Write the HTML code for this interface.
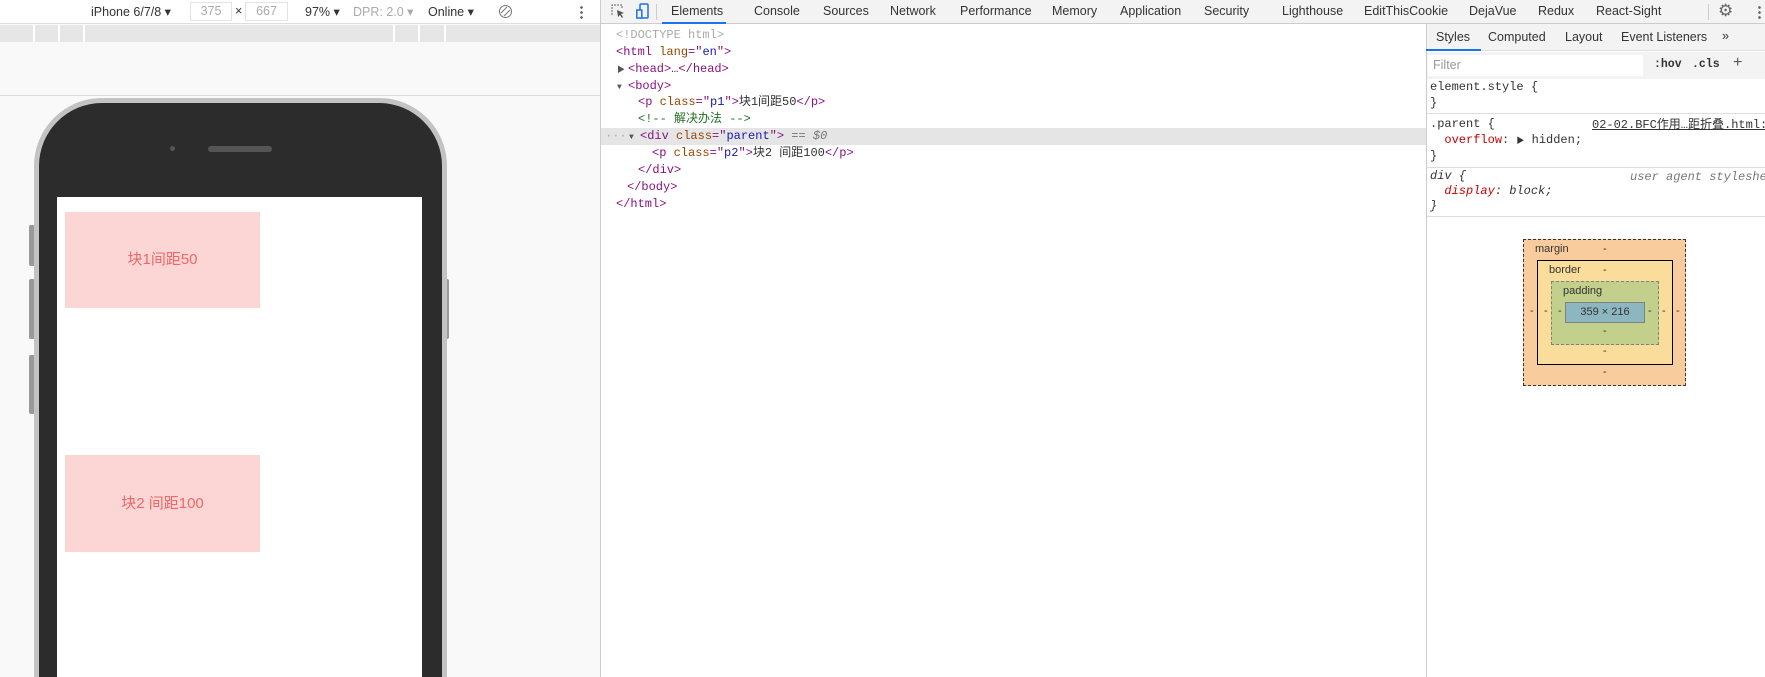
<!DOCTYPE html>
<html><head><meta charset="utf-8"><style>
*{box-sizing:border-box;margin:0;padding:0}
html,body{width:1765px;height:677px;overflow:hidden}
body{background:#fff;font-family:"Liberation Sans","Noto Sans CJK SC",sans-serif;font-size:12.5px;color:#333}
#w{position:relative;width:1765px;height:677px;overflow:hidden}
.a{position:absolute;white-space:nowrap}
.m{font-family:"Liberation Mono","Noto Sans CJK SC",monospace;font-size:12px}
.tag{color:#881280}.at{color:#994500}.av{color:#1a1aa6}.g{color:#aaa}.cm{color:#236e25}
.ln{position:absolute;white-space:nowrap;line-height:17px}
</style></head><body><div id="w">
<div class="a" style="left:0;top:0;width:600px;height:677px;background:#f9f9f9"></div>
<div class="a" style="left:0;top:0;width:600px;height:24px;background:#fff;border-bottom:1px solid #ddd"></div>
<div class="a" style="left:91px;top:4px;color:#333">iPhone 6/7/8 ▾</div>
<div class="a" style="left:190px;top:2px;width:42px;height:19px;border:1px solid #e3e3e3;color:#aaa;text-align:center;line-height:17px">375</div>
<div class="a" style="left:235px;top:4px;color:#333">×</div>
<div class="a" style="left:245px;top:2px;width:43px;height:19px;border:1px solid #e3e3e3;color:#aaa;text-align:center;line-height:17px">667</div>
<div class="a" style="left:305px;top:4px">97% ▾</div>
<div class="a" style="left:353px;top:4px;color:#aaa">DPR: 2.0 ▾</div>
<div class="a" style="left:428px;top:4px">Online ▾</div>
<svg class="a" style="left:498px;top:4px" width="15" height="15" viewBox="0 0 15 15"><circle cx="7.5" cy="7.5" r="6" fill="none" stroke="#777"/><path d="M3 9 L9 3 M6 12 L12 6" stroke="#777"/></svg>
<div class="a" style="left:580px;top:5px;width:3px;height:14px;background:radial-gradient(circle,#666 1.2px,transparent 1.5px) 0 0/3px 5px"></div>
<div class="a" style="left:0;top:25px;width:600px;height:17px;background:#e6e6e6"></div>
<div class="a" style="left:33px;top:25px;width:2px;height:17px;background:#fff"></div>
<div class="a" style="left:58px;top:25px;width:2px;height:17px;background:#fff"></div>
<div class="a" style="left:83px;top:25px;width:2px;height:17px;background:#fff"></div>
<div class="a" style="left:393px;top:25px;width:2px;height:17px;background:#fff"></div>
<div class="a" style="left:418px;top:25px;width:2px;height:17px;background:#fff"></div>
<div class="a" style="left:444px;top:25px;width:2px;height:17px;background:#fff"></div>
<div class="a" style="left:0;top:95px;width:600px;height:1px;background:#ddd"></div>
<div class="a" style="left:29px;top:225px;width:6px;height:41px;background:#999;border-radius:2px"></div>
<div class="a" style="left:29px;top:279px;width:6px;height:60px;background:#999;border-radius:2px"></div>
<div class="a" style="left:29px;top:355px;width:6px;height:59px;background:#999;border-radius:2px"></div>
<div class="a" style="left:443px;top:279px;width:6px;height:60px;background:#999;border-radius:2px"></div>
<div class="a" style="left:34px;top:98px;width:413px;height:579px;background:#c3c3c3;border-radius:68px 68px 0 0"></div>
<div class="a" style="left:39px;top:103px;width:403px;height:574px;background:#2c2c2c;border-radius:63px 63px 0 0"></div>
<div class="a" style="left:170px;top:146px;width:5px;height:5px;border-radius:50%;background:#555"></div>
<div class="a" style="left:208px;top:146px;width:64px;height:6px;border-radius:3px;background:#555"></div>
<div class="a" style="left:57px;top:197px;width:365px;height:480px;background:#fff"></div>
<div class="a" style="left:65px;top:212px;width:195px;height:96px;background:#fcd5d5;color:#f06767;font-size:15px;text-align:center;line-height:96px">块1间距50</div>
<div class="a" style="left:65px;top:455px;width:195px;height:97px;background:#fcd5d5;color:#f06767;font-size:15px;text-align:center;line-height:97px">块2 间距100</div>
<div class="a" style="left:600px;top:0;width:1px;height:677px;background:#ccc"></div>
<div class="a" style="left:601px;top:0;width:1164px;height:24px;background:#f3f3f3;border-bottom:1px solid #ccc"></div>
<svg class="a" style="left:611px;top:4px" width="14" height="15" viewBox="0 0 14 15"><path d="M1 11V1h10v4" fill="none" stroke="#666" stroke-dasharray="2 1"/><path d="M6 6l7 3-3 1 2 3-1 1-2-3-2 2z" fill="#555"/></svg>
<svg class="a" style="left:636px;top:3px" width="13" height="17" viewBox="0 0 13 17"><rect x="4" y="1" width="8" height="14" rx="1" fill="none" stroke="#1a73e8" stroke-width="1.5"/><rect x="0.8" y="7" width="5" height="8" fill="#f3f3f3" stroke="#1a73e8" stroke-width="1.5"/></svg>
<div class="a" style="left:656px;top:4px;width:1px;height:16px;background:#ccc"></div>
<div class="a" style="left:671px;top:4px;color:#333">Elements</div>
<div class="a" style="left:662px;top:22px;width:64px;height:2px;background:#1a73e8"></div>
<div class="a" style="left:754px;top:4px">Console</div>
<div class="a" style="left:823px;top:4px">Sources</div>
<div class="a" style="left:890px;top:4px">Network</div>
<div class="a" style="left:960px;top:4px">Performance</div>
<div class="a" style="left:1052px;top:4px">Memory</div>
<div class="a" style="left:1120px;top:4px">Application</div>
<div class="a" style="left:1204px;top:4px">Security</div>
<div class="a" style="left:1282px;top:4px">Lighthouse</div>
<div class="a" style="left:1364px;top:4px">EditThisCookie</div>
<div class="a" style="left:1469px;top:4px">DejaVue</div>
<div class="a" style="left:1538px;top:4px">Redux</div>
<div class="a" style="left:1596px;top:4px">React-Sight</div>
<div class="a" style="left:1708px;top:4px;width:1px;height:16px;background:#ccc"></div>
<div class="a" style="left:1718px;top:1px;font-size:17px;color:#666">⚙</div>
<div class="a" style="left:1758px;top:5px;width:3px;height:14px;background:radial-gradient(circle,#666 1.2px,transparent 1.5px) 0 0/3px 5px"></div>
<div class="a" style="left:601px;top:128px;width:825px;height:17px;background:#e5e5e5"></div>
<div class="m">
<div class="ln g" style="left:605px;top:128px">···</div>
<div class="ln g" style="left:616px;top:27px">&lt;!DOCTYPE html&gt;</div>
<div class="ln" style="left:616px;top:44px"><span class="tag">&lt;html</span> <span class="at">lang</span><span class="tag">="</span><span class="av">en</span><span class="tag">"&gt;</span></div>
<div class="ln" style="left:617px;top:61px"><span style="color:#555;font-size:8px">▶</span></div>
<div class="ln" style="left:628px;top:61px"><span class="tag">&lt;head&gt;</span>…<span class="tag">&lt;/head&gt;</span></div>
<div class="ln" style="left:617px;top:78px"><span style="color:#555;font-size:8px">▼</span></div>
<div class="ln" style="left:628px;top:78px"><span class="tag">&lt;body&gt;</span></div>
<div class="ln" style="left:638px;top:94px"><span class="tag">&lt;p</span> <span class="at">class</span><span class="tag">="</span><span class="av">p1</span><span class="tag">"&gt;</span>块1间距50<span class="tag">&lt;/p&gt;</span></div>
<div class="ln cm" style="left:638px;top:111px">&lt;!-- 解决办法 --&gt;</div>
<div class="ln" style="left:629px;top:128px"><span style="color:#555;font-size:8px">▼</span></div>
<div class="ln" style="left:640px;top:128px"><span class="tag">&lt;div</span> <span class="at">class</span><span class="tag">="</span><span class="av">parent</span><span class="tag">"&gt;</span> <span style="color:#777">== <i>$0</i></span></div>
<div class="ln" style="left:652px;top:145px"><span class="tag">&lt;p</span> <span class="at">class</span><span class="tag">="</span><span class="av">p2</span><span class="tag">"&gt;</span>块2 间距100<span class="tag">&lt;/p&gt;</span></div>
<div class="ln tag" style="left:638px;top:162px">&lt;/div&gt;</div>
<div class="ln tag" style="left:627px;top:179px">&lt;/body&gt;</div>
<div class="ln tag" style="left:616px;top:196px">&lt;/html&gt;</div>
</div>
<div class="a" style="left:1426px;top:24px;width:1px;height:653px;background:#ccc"></div>
<div class="a" style="left:1427px;top:24px;width:338px;height:27px;background:#f3f3f3;border-bottom:1px solid #ddd"></div>
<div class="a" style="left:1436px;top:30px">Styles</div>
<div class="a" style="left:1426px;top:49px;width:55px;height:2px;background:#1a73e8"></div>
<div class="a" style="left:1488px;top:30px">Computed</div>
<div class="a" style="left:1565px;top:30px">Layout</div>
<div class="a" style="left:1621px;top:30px">Event Listeners</div>
<div class="a" style="left:1722px;top:29px">»</div>
<div class="a" style="left:1427px;top:52px;width:338px;height:27px;background:#f3f3f3"></div>
<div class="a" style="left:1428px;top:55px;width:215px;height:21px;background:#fff;color:#999;padding:3px 5px">Filter</div>
<div class="a m" style="left:1654px;top:58px;font-weight:bold;font-size:11.5px;color:#333">:hov</div>
<div class="a m" style="left:1692px;top:58px;font-weight:bold;font-size:11.5px;color:#333">.cls</div>
<div class="a" style="left:1733px;top:54px;font-size:16px;color:#555">+</div>
<div class="a m" style="left:1430px;top:79px;line-height:16px;color:#333">element.style {<br>}</div>
<div class="a" style="left:1427px;top:113px;width:338px;height:1px;background:#ddd"></div>
<div class="a m" style="left:1430px;top:117px;line-height:15.5px;color:#333">.parent {<br>&nbsp;&nbsp;<span style="color:#c80000">overflow</span>: <span style="font-size:8px">▶</span> hidden;<br>}</div>
<div class="a m" style="left:1592px;top:117px;line-height:16px;text-decoration:underline;color:#333">02-02.BFC作用…距折叠.html:</div>
<div class="a" style="left:1427px;top:167px;width:338px;height:1px;background:#ddd"></div>
<div class="a m" style="left:1430px;top:169px;line-height:15px;color:#333;font-style:italic">div {<br>&nbsp;&nbsp;<span style="color:#c80000">display</span>: block;<br>}</div>
<div class="a m" style="left:1630px;top:169px;line-height:16px;color:#777;font-style:italic">user agent styleshe</div>
<div class="a" style="left:1427px;top:216px;width:338px;height:1px;background:#ddd"></div>
<div class="a" style="left:1523px;top:239px;width:163px;height:147px;background:#f9cc9d;border:1px dashed #333;font-size:11px"></div>
<div class="a" style="left:1537px;top:260px;width:136px;height:105px;background:#fbdd9b;border:1px solid #000"></div>
<div class="a" style="left:1551px;top:281px;width:108px;height:64px;background:#c3d08b;border:1px dashed #808080"></div>
<div class="a" style="left:1565px;top:302px;width:80px;height:21px;background:#8cb6c0;border:1px solid #808080;text-align:center;font-size:11px;line-height:19px">359 × 216</div>
<div class="a" style="left:1535px;top:243px;font-size:11px">margin</div>
<div class="a" style="left:1549px;top:264px;font-size:11px">border</div>
<div class="a" style="left:1563px;top:285px;font-size:11px">padding</div>
<div class="a" style="left:1603px;top:243px;font-size:11px">-</div>
<div class="a" style="left:1603px;top:264px;font-size:11px">-</div>
<div class="a" style="left:1603px;top:345px;font-size:11px">-</div>
<div class="a" style="left:1603px;top:325px;font-size:11px">-</div>
<div class="a" style="left:1603px;top:366px;font-size:11px">-</div>
<div class="a" style="left:1530px;top:305px;font-size:11px">-</div>
<div class="a" style="left:1544px;top:305px;font-size:11px">-</div>
<div class="a" style="left:1558px;top:305px;font-size:11px">-</div>
<div class="a" style="left:1648px;top:305px;font-size:11px">-</div>
<div class="a" style="left:1662px;top:305px;font-size:11px">-</div>
<div class="a" style="left:1676px;top:305px;font-size:11px">-</div>
</div></body></html>
